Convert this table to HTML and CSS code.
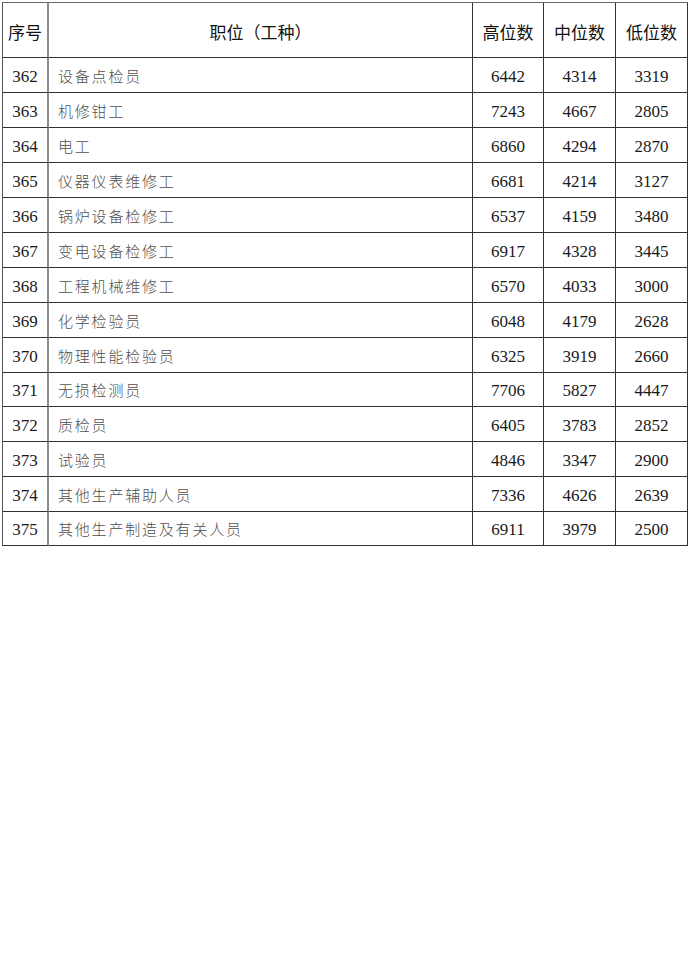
FILE: index.html
```html
<!DOCTYPE html>
<html lang="zh-CN">
<head>
<meta charset="utf-8">
<title>职位工资价位表</title>
<link rel="stylesheet" href="styles.css">
</head>
<body>
<table class="wage">
  <colgroup>
    <col class="c-no">
    <col class="c-name">
    <col class="c-val">
    <col class="c-val2">
    <col class="c-val2">
  </colgroup>
  <thead>
    <tr class="head">
      <th class="no">序号</th>
      <th>职位（工种）</th>
      <th>高位数</th>
      <th>中位数</th>
      <th>低位数</th>
    </tr>
  </thead>
  <tbody>
    <tr><td class="no">362</td><td class="name">设备点检员</td><td>6442</td><td>4314</td><td>3319</td></tr>
    <tr><td class="no">363</td><td class="name">机修钳工</td><td>7243</td><td>4667</td><td>2805</td></tr>
    <tr><td class="no">364</td><td class="name">电工</td><td>6860</td><td>4294</td><td>2870</td></tr>
    <tr><td class="no">365</td><td class="name">仪器仪表维修工</td><td>6681</td><td>4214</td><td>3127</td></tr>
    <tr><td class="no">366</td><td class="name">锅炉设备检修工</td><td>6537</td><td>4159</td><td>3480</td></tr>
    <tr><td class="no">367</td><td class="name">变电设备检修工</td><td>6917</td><td>4328</td><td>3445</td></tr>
    <tr><td class="no">368</td><td class="name">工程机械维修工</td><td>6570</td><td>4033</td><td>3000</td></tr>
    <tr><td class="no">369</td><td class="name">化学检验员</td><td>6048</td><td>4179</td><td>2628</td></tr>
    <tr><td class="no">370</td><td class="name">物理性能检验员</td><td>6325</td><td>3919</td><td>2660</td></tr>
    <tr class="short"><td class="no">371</td><td class="name">无损检测员</td><td>7706</td><td>5827</td><td>4447</td></tr>
    <tr><td class="no">372</td><td class="name">质检员</td><td>6405</td><td>3783</td><td>2852</td></tr>
    <tr><td class="no">373</td><td class="name">试验员</td><td>4846</td><td>3347</td><td>2900</td></tr>
    <tr><td class="no">374</td><td class="name">其他生产辅助人员</td><td>7336</td><td>4626</td><td>2639</td></tr>
    <tr class="short"><td class="no">375</td><td class="name">其他生产制造及有关人员</td><td>6911</td><td>3979</td><td>2500</td></tr>
  </tbody>
</table>
</body>
</html>
```
FILE: styles.css
```css
html, body {
  margin: 0;
  padding: 0;
  background: #ffffff;
}

body {
  padding: 2px 0 0 2px;
}

.wage {
  table-layout: fixed;
  width: 686px;
  border-collapse: separate;
  border-spacing: 0;
  border-top: 1px solid #6a6a6a;
  border-left: 1px solid #555555;
}

.c-no { width: 46px; }
.c-name { width: 424px; }
.c-val { width: 71px; }
.c-val2 { width: 72px; }

.wage th,
.wage td {
  padding: 0;
  border-right: 1px solid #333333;
  border-bottom: 1px solid #333333;
  text-align: center;
  vertical-align: middle;
  overflow: hidden;
  white-space: nowrap;
}

.wage th.no,
.wage td.no {
  border-right: 2px solid #8c8c8c;
}

.wage tr.head {
  height: 55px;
}

.wage tbody tr {
  height: 35px;
}

.wage tbody tr.short {
  height: 34px;
}

.wage th {
  font-family: "Noto Sans CJK SC", "Noto Sans", sans-serif;
  font-size: 17px;
  font-weight: 400;
  color: #111111;
  padding-top: 3px;
}

.wage td {
  font-family: "Liberation Serif", "Times New Roman", "DejaVu Serif", serif;
  font-size: 17px;
  font-weight: 400;
  color: #1a1a1a;
  padding-top: 3px;
}

.wage td.name {
  text-align: left;
  padding-left: 9px;
  padding-top: 0;
  font-family: "Noto Sans CJK SC", sans-serif;
  font-size: 15px;
  font-weight: 300;
  letter-spacing: 1.8px;
  color: #505050;
}
```
